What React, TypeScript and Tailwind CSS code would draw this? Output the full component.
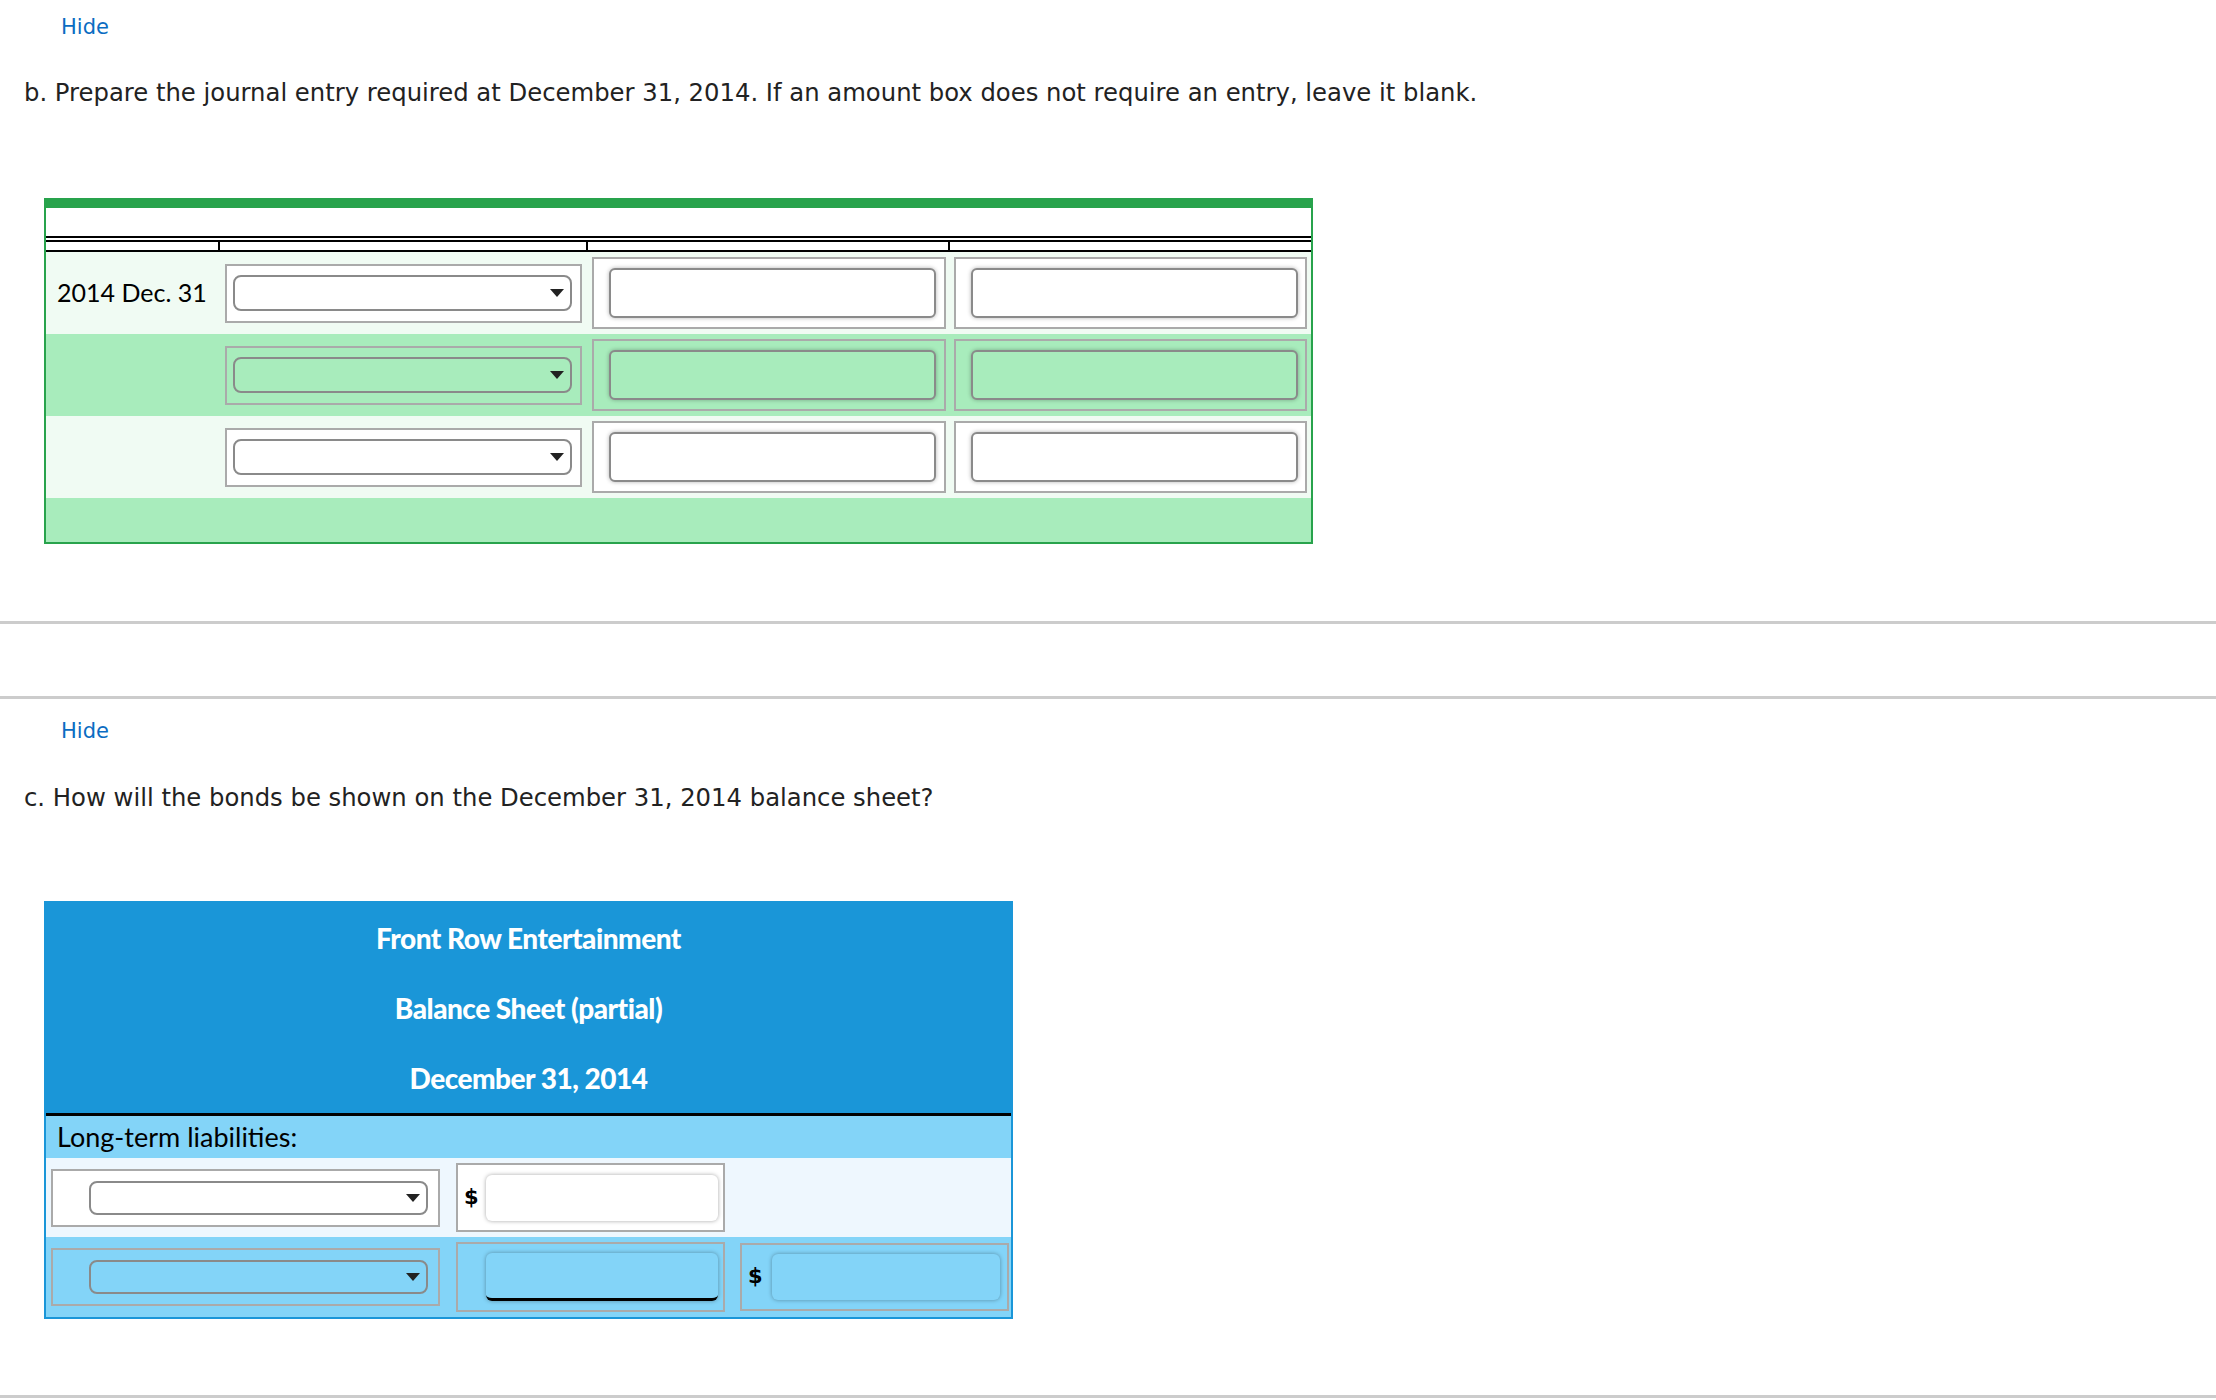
import React from 'react';

const Caret = () => (
  <svg width="16" height="10" viewBox="0 0 16 10" className="shrink-0">
    <path d="M1 1h14L8 9z" fill="#222" />
  </svg>
);

function SelectBox({ className = '' }: { className?: string }) {
  return (
    <div className={`flex items-center justify-end rounded-[8px] border-2 border-[#8a8a8a] pr-[5px] ${className}`}>
      <Caret />
    </div>
  );
}

function AmountInput({ className = '' }: { className?: string }) {
  return (
    <div className={`rounded-[6px] border-2 border-[#8a8a8a] shadow-[0_0_4px_rgba(0,0,0,0.3)] ${className}`} />
  );
}

function JournalRow({ date, shaded }: { date?: string; shaded: boolean }) {
  const rowBg = shaded ? 'bg-[#a8ecbc]' : 'bg-[#f0fbf3]';
  const cellBg = shaded ? 'bg-[#a8ecbc]' : 'bg-white';
  const inputBg = shaded ? 'bg-[#a8ecbc]' : 'bg-white';
  return (
    <div className={`flex h-[82px] items-center ${rowBg}`}>
      <div className="w-[174px] shrink-0 pl-[11px] text-[25px] text-black font-['Lato',sans-serif]">{date}</div>
      <div className="w-[368px] shrink-0 pl-[5px] pr-[6px]">
        <div className={`flex h-[59px] items-center border-2 border-[#aaaaaa] pl-[6px] pr-[8px] ${cellBg}`}>
          <SelectBox className={`h-[36px] w-full ${inputBg}`} />
        </div>
      </div>
      <div className="w-[362px] shrink-0 px-[4px]">
        <div className={`flex h-[72px] items-center border-2 border-[#aaaaaa] pl-[15px] pr-[8px] ${cellBg}`}>
          <AmountInput className={`h-[50px] w-full ${inputBg}`} />
        </div>
      </div>
      <div className="w-[361px] shrink-0 pl-[4px] pr-[4px]">
        <div className={`flex h-[72px] items-center border-2 border-[#aaaaaa] pl-[15px] pr-[7px] ${cellBg}`}>
          <AmountInput className={`h-[50px] w-full ${inputBg}`} />
        </div>
      </div>
    </div>
  );
}

function SoftInput({ className = '' }: { className?: string }) {
  return <div className={`rounded-[6px] shadow-[0_0_4px_rgba(0,0,0,0.35)] ${className}`} />;
}

export default function App() {
  return (
    <div className="w-[2216px] min-h-[1400px] bg-white text-[#222] font-['DejaVu_Sans',sans-serif]">
      {/* part b */}
      <div className="pl-[61px] pt-[14px] text-[21px] leading-[26px] text-[#0a6cc2]">Hide</div>
      <p className="mt-[40px] pl-[24px] text-[24.3px] leading-[26px]">
        b. Prepare the journal entry required at December 31, 2014. If an amount box does not require an entry, leave it blank.
      </p>

      <div className="ml-[44px] mt-[92px] w-[1269px] border-x-2 border-b-2 border-t-[10px] border-[#28a34c]">
        <div className="h-[28px] bg-white" />
        <div className="border-t-2 border-black bg-white pt-[2px]">
          <div className="flex h-[12px] border-y-2 border-black">
            <div className="w-[174px] shrink-0 border-r-2 border-black" />
            <div className="w-[368px] shrink-0 border-r-2 border-black" />
            <div className="w-[362px] shrink-0 border-r-2 border-black" />
            <div className="flex-1" />
          </div>
        </div>
        <JournalRow date="2014 Dec. 31" shaded={false} />
        <JournalRow shaded />
        <JournalRow shaded={false} />
        <div className="h-[44px] bg-[#a8ecbc]" />
      </div>

      <div className="mt-[77px] h-[3px] bg-[#cccccc]" />
      <div className="mt-[72px] h-[3px] bg-[#cccccc]" />

      {/* part c */}
      <div className="mt-[19px] pl-[61px] text-[21px] leading-[26px] text-[#0a6cc2]">Hide</div>
      <p className="mt-[41px] pl-[24px] text-[24.3px] leading-[26px]">
        c. How will the bonds be shown on the December 31, 2014 balance sheet?
      </p>

      <div className="ml-[44px] mt-[90px] w-[969px] border-2 border-[#1a96d8] font-['Lato',sans-serif]">
        <div className="bg-[#1a96d8] text-center text-[28px] font-black tracking-[-0.5px] text-white">
          <div className="flex h-[70px] items-center justify-center">Front Row Entertainment</div>
          <div className="flex h-[70px] items-center justify-center">Balance Sheet (partial)</div>
          <div className="flex h-[70px] items-center justify-center">December 31, 2014</div>
        </div>
        <div className="flex h-[45px] items-center border-t-[3px] border-black bg-[#83d4f8] pl-[11px] text-[27px] text-black">
          Long-term liabilities:
        </div>
        <div className="flex h-[79px] items-center bg-[#eef7fe]">
          <div className="w-[402px] shrink-0 pl-[5px] pr-[8px]">
            <div className="flex h-[58px] items-center border-2 border-[#aaaaaa] bg-white pl-[36px] pr-[10px]">
              <SelectBox className="h-[34px] w-full bg-white" />
            </div>
          </div>
          <div className="w-[283px] shrink-0 pl-[8px] pr-[6px]">
            <div className="flex h-[69px] items-center border-2 border-[#aaaaaa] bg-white pl-[6px] pr-[5px]">
              <span className="w-[22px] shrink-0 text-[21px] font-bold text-black font-['DejaVu_Sans',sans-serif]">$</span>
              <SoftInput className="h-[46px] flex-1 bg-white" />
            </div>
          </div>
        </div>
        <div className="flex h-[80px] items-center bg-[#83d4f8]">
          <div className="w-[402px] shrink-0 pl-[5px] pr-[8px]">
            <div className="flex h-[58px] items-center border-2 border-[#aaaaaa] pl-[36px] pr-[10px]">
              <SelectBox className="h-[34px] w-full" />
            </div>
          </div>
          <div className="w-[283px] shrink-0 pl-[8px] pr-[6px]">
            <div className="flex h-[70px] items-center border-2 border-[#aaaaaa] pl-[28px] pr-[5px]">
              <SoftInput className="h-[48px] flex-1 border-b-[3px] border-black" />
            </div>
          </div>
          <div className="flex-1 pl-[9px] pr-[2px]">
            <div className="flex h-[68px] items-center border-2 border-[#aaaaaa] pl-[6px] pr-[7px]">
              <span className="w-[24px] shrink-0 text-[21px] font-bold text-black font-['DejaVu_Sans',sans-serif]">$</span>
              <SoftInput className="h-[46px] flex-1" />
            </div>
          </div>
        </div>
      </div>

      <div className="mt-[76px] h-[3px] bg-[#cccccc]" />
    </div>
  );
}
